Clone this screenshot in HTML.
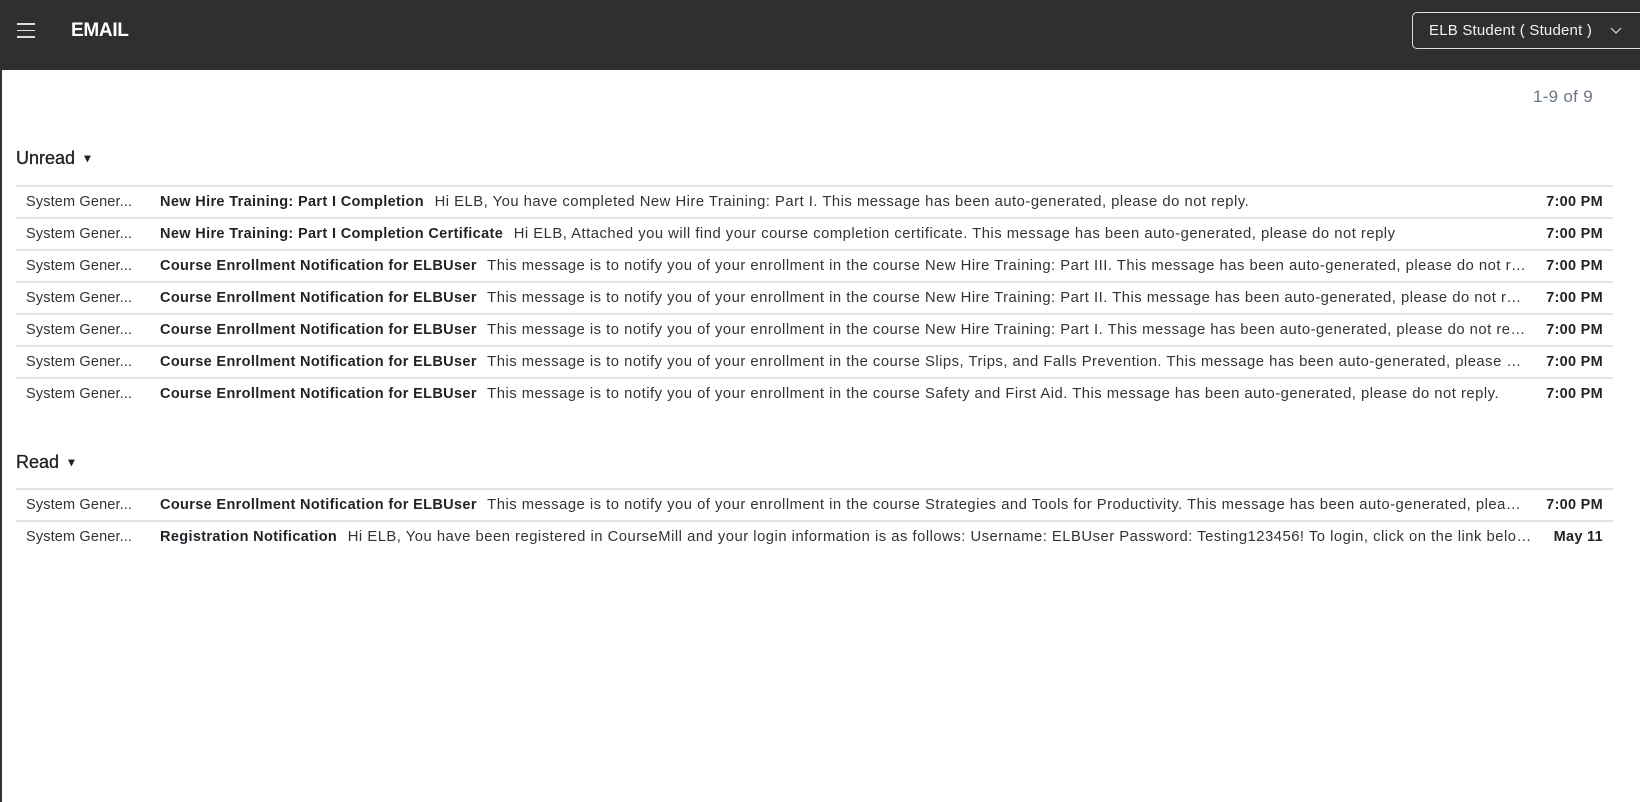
<!DOCTYPE html>
<html><head><meta charset="utf-8"><style>
*{box-sizing:border-box;margin:0;padding:0}
html,body{width:1640px;height:802px;overflow:hidden;background:#fff;font-family:"Liberation Sans",Arial,sans-serif;color:#1f2328}
.hdr{position:absolute;left:0;top:0;width:1640px;height:70px;background:#2f2f2f}
.ham{position:absolute;left:17px;top:23px;width:18px}
.ham i{display:block;height:1.5px;background:#ddd;margin-bottom:5px}
.title{position:absolute;left:71px;top:20px;color:#fff;font-weight:bold;font-size:19px;letter-spacing:-0.3px}
.btn{position:absolute;left:1412px;top:12px;width:236px;height:37px;border:1px solid #ddd;border-radius:5px;color:#f2f2f2;font-size:15px;line-height:35px;padding-left:16px;letter-spacing:0.2px}
.btn svg{position:absolute;left:197px;top:14px}
.lb{position:absolute;left:0;top:70px;width:2px;height:732px;background:#333}
.count{position:absolute;right:47px;top:87px;font-size:17px;color:#6b7785;letter-spacing:0.3px}
.sec{position:absolute;left:16px;font-size:18px;color:#222;-webkit-text-stroke:0.3px #222}
.sec span{font-size:11px;margin-left:7px;vertical-align:2px}
.list{position:absolute;left:16px;width:1597px}
.row{height:32px;border-top:2px solid #e4e4e8;display:flex;align-items:center;font-size:14.5px;padding-left:10px;padding-right:10px;white-space:nowrap}
.s{width:134px;flex:none;overflow:hidden;color:#333;letter-spacing:0.15px}
.m{flex:1;overflow:hidden;text-overflow:ellipsis;color:#333;padding-right:18px;font-size:14.8px;letter-spacing:0.5px}
.m b{color:#1f2328;margin-right:6px;font-size:14.5px;letter-spacing:0.35px}
.t{flex:none;font-weight:bold;text-align:right;color:#1f2328;letter-spacing:0.3px}
</style></head><body>
<div class="hdr">
<div class="ham"><i></i><i></i><i></i></div>
<div class="title">EMAIL</div>
<div class="btn">ELB Student ( Student )<svg width="12" height="7" viewBox="0 0 12 7"><path d="M1 1l5 5 5-5" fill="none" stroke="#ddd" stroke-width="1.2"/></svg></div>
</div>
<div class="lb"></div>
<div class="count">1-9 of 9</div>
<div class="sec" style="top:148px">Unread<span>▼</span></div>
<div class="list" style="top:185px">
<div class="row"><div class="s">System Gener...</div><div class="m"><b>New Hire Training: Part I Completion</b> Hi ELB, You have completed New Hire Training: Part I. This message has been auto-generated, please do not reply.</div><div class="t">7:00 PM</div></div>
<div class="row"><div class="s">System Gener...</div><div class="m"><b>New Hire Training: Part I Completion Certificate</b> Hi ELB, Attached you will find your course completion certificate. This message has been auto-generated, please do not reply</div><div class="t">7:00 PM</div></div>
<div class="row"><div class="s">System Gener...</div><div class="m"><b>Course Enrollment Notification for ELBUser</b> This message is to notify you of your enrollment in the course New Hire Training: Part III. This message has been auto-generated, please do not reply.</div><div class="t">7:00 PM</div></div>
<div class="row"><div class="s">System Gener...</div><div class="m"><b>Course Enrollment Notification for ELBUser</b> This message is to notify you of your enrollment in the course New Hire Training: Part II. This message has been auto-generated, please do not reply.</div><div class="t">7:00 PM</div></div>
<div class="row"><div class="s">System Gener...</div><div class="m"><b>Course Enrollment Notification for ELBUser</b> This message is to notify you of your enrollment in the course New Hire Training: Part I. This message has been auto-generated, please do not reply.</div><div class="t">7:00 PM</div></div>
<div class="row"><div class="s">System Gener...</div><div class="m"><b>Course Enrollment Notification for ELBUser</b> This message is to notify you of your enrollment in the course Slips, Trips, and Falls Prevention. This message has been auto-generated, please do not reply.</div><div class="t">7:00 PM</div></div>
<div class="row"><div class="s">System Gener...</div><div class="m"><b>Course Enrollment Notification for ELBUser</b> This message is to notify you of your enrollment in the course Safety and First Aid. This message has been auto-generated, please do not reply.</div><div class="t">7:00 PM</div></div>
</div>
<div class="sec" style="top:452px">Read<span>▼</span></div>
<div class="list" style="top:488px">
<div class="row"><div class="s">System Gener...</div><div class="m"><b>Course Enrollment Notification for ELBUser</b> This message is to notify you of your enrollment in the course Strategies and Tools for Productivity. This message has been auto-generated, please do not reply.</div><div class="t">7:00 PM</div></div>
<div class="row"><div class="s">System Gener...</div><div class="m"><b>Registration Notification</b> Hi ELB, You have been registered in CourseMill and your login information is as follows: Username: ELBUser Password: Testing123456! To login, click on the link below and enter your credentials.</div><div class="t">May 11</div></div>
</div>
</body></html>
